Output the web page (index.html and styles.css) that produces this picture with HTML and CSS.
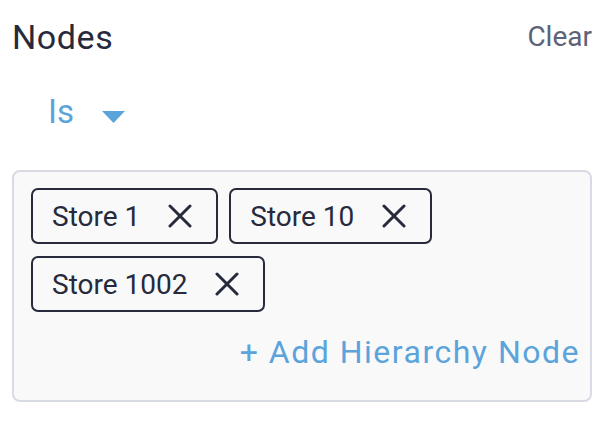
FILE: index.html
```html
<!DOCTYPE html>
<html>
<head>
<meta charset="utf-8">
<link rel="stylesheet" href="styles.css">
</head>
<body>
<div class="panel">
  <div class="header">
    <span class="title">Nodes</span>
    <span class="clear">Clear</span>
  </div>
  <div class="operator">
    <span class="op-label">Is</span>
    <svg class="caret" width="23" height="12" viewBox="0 0 23 12"><path d="M0 0 H23 L11.5 12 Z" fill="#5ba4db"/></svg>
  </div>
  <div class="box">
    <div class="chips">
      <div class="chip"><span>Store 1</span><svg class="x" width="24" height="24" viewBox="0 0 24 24"><path d="M2 2 L22 22 M22 2 L2 22" stroke="#262a3b" stroke-width="3" stroke-linecap="round"/></svg></div>
      <div class="chip"><span>Store 10</span><svg class="x" width="24" height="24" viewBox="0 0 24 24"><path d="M2 2 L22 22 M22 2 L2 22" stroke="#262a3b" stroke-width="3" stroke-linecap="round"/></svg></div>
      <div class="chip"><span>Store 1002</span><svg class="x" width="24" height="24" viewBox="0 0 24 24"><path d="M2 2 L22 22 M22 2 L2 22" stroke="#262a3b" stroke-width="3" stroke-linecap="round"/></svg></div>
    </div>
    <div class="add-row">
      <span class="add">+ Add Hierarchy Node</span>
    </div>
  </div>
</div>
</body>
</html>
```

FILE: styles.css
```css
html, body {
  margin: 0;
  padding: 0;
  background: #ffffff;
}
body {
  font-family: Roboto, "Liberation Sans", sans-serif;
}
.panel {
  padding: 17px 18px 0 12px;
}
.header {
  display: flex;
  justify-content: space-between;
  align-items: center;
  height: 40px;
}
.title {
  font-size: 34px;
  line-height: 40px;
  color: #262a3b;
  letter-spacing: 0.6px;
}
.clear {
  font-size: 28px;
  line-height: 40px;
  color: #5d6275;
}
.operator {
  margin-top: 35px;
  padding-left: 36px;
  font-size: 33px;
  line-height: 40px;
  color: #5ba4db;
}
.caret {
  margin-left: 20px;
  vertical-align: baseline;
}
.box {
  margin-top: 38px;
  border: 2px solid #d8dbe4;
  border-radius: 8px;
  background: #f9f9fa;
  padding: 16px 10px 28px 17px;
}
.chips {
  display: flex;
  flex-wrap: wrap;
  gap: 12px 11px;
}
.chip {
  box-sizing: border-box;
  height: 56px;
  display: flex;
  align-items: center;
  border: 2px solid #262a3b;
  border-radius: 7px;
  padding: 0 24px 0 19px;
  font-size: 28px;
  color: #262a3b;
}
.x {
  margin-left: 28px;
}
.add-row {
  margin-top: 20px;
  display: flex;
  justify-content: flex-end;
}
.add {
  font-size: 32px;
  line-height: 40px;
  color: #5ba4db;
  letter-spacing: 1.5px;
}
```
